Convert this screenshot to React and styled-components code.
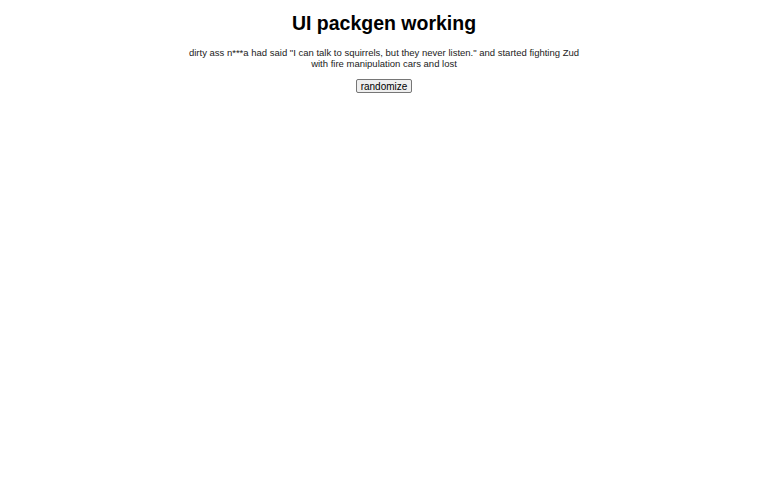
import React, { useState } from 'react';
import styled, { createGlobalStyle } from 'styled-components';

const GlobalStyle = createGlobalStyle`
  body {
    margin: 0;
    background: #ffffff;
    font-family: "Liberation Sans", Arial, sans-serif;
    color: #000000;
  }
`;

const Page = styled.div`
  display: flex;
  flex-direction: column;
  align-items: center;
  padding-top: 12px;
`;

const Title = styled.h1`
  margin: 0;
  font-size: 19.5px;
  font-weight: 700;
  line-height: 22px;
`;

const Sentence = styled.p`
  margin: 13px 0 0 0;
  max-width: 400px;
  font-size: 9.5px;
  line-height: 11px;
  text-align: center;
  color: #222222;
`;

const Button = styled.button`
  margin-top: 10px;
  padding: 1px 4px 0 4px;
  font-family: "Liberation Sans", Arial, sans-serif;
  font-size: 10px;
  line-height: 11px;
  color: #000000;
  background: #efefef;
  border: 1px solid #767676;
  border-radius: 2px;
  cursor: pointer;
`;

// 문장 조각들
const subjects = ['dirty ass n***a', 'a sleepy wizard', 'the mailman'];
const quotes = ['I can talk to squirrels, but they never listen.', 'Nobody expects the toaster.', 'Where are my socks?'];
const endings = ['started fighting Zud with fire manipulation cars and lost', 'went home early', 'ate a sandwich'];

const pick = (arr) => arr[Math.floor(Math.random() * arr.length)];

export default function App() {
  const [sentence, setSentence] = useState(
    `${subjects[0]} had said "${quotes[0]}" and ${endings[0]}`
  );

  const randomize = () => {
    setSentence(`${pick(subjects)} had said "${pick(quotes)}" and ${pick(endings)}`);
  };

  return (
    <>
      <GlobalStyle />
      <Page>
        <Title>UI packgen working</Title>
        <Sentence>{sentence}</Sentence>
        <Button onClick={randomize}>randomize</Button>
      </Page>
    </>
  );
}
